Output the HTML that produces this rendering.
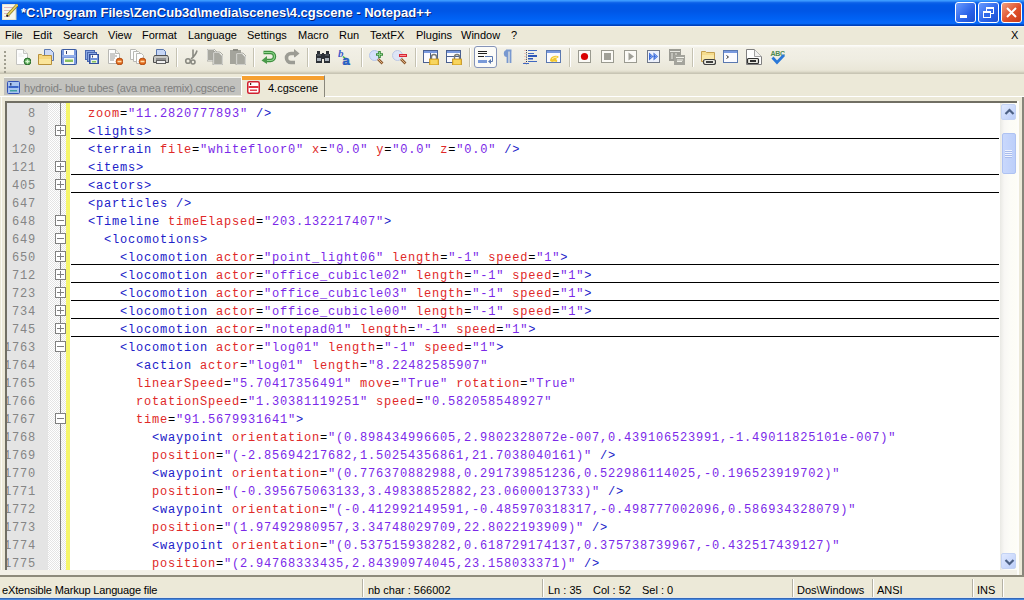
<!DOCTYPE html>
<html><head><meta charset="utf-8">
<style>
*{margin:0;padding:0;box-sizing:border-box}
html,body{width:1024px;height:600px;overflow:hidden;background:#ece9d8;font-family:"Liberation Sans",sans-serif;position:relative}
.a{position:absolute}
#title{left:0;top:0;width:1024px;height:26px;background:linear-gradient(to bottom,#3c9cff 0px,#3a98ff 1px,#1a70ee 2px,#0a60e8 3px,#0058e6 5px,#0056e6 11px,#005cee 15px,#0062f4 19px,#0868fa 22px,#0668f6 23.5px,#0050d0 24.5px,#0038b0 26px)}
#ttext{left:21px;top:5px;color:#fff;font-weight:bold;font-size:13px;white-space:nowrap;text-shadow:1px 1px 0 #0a1f6e}
.wb{top:2px;width:21px;height:21px;border:1px solid #fff;border-radius:3px}
#menu{left:0;top:26px;width:1024px;height:19px;background:#ece9d8}
.mi{top:29px;font-size:11px;color:#000;white-space:nowrap}
#tb{left:0;top:45px;width:1024px;height:29px;background:linear-gradient(to bottom,#fdfdfb 0px,#fbfaf6 1px,#f2f0e6 3px,#efede2 14px,#eae7d8 25px,#dcd9c8 27px,#c8c5b4 28px)}
.sep{top:48px;width:2px;height:19px;border-left:1px solid #c5c2b2;border-right:1px solid #fff}
.ic{top:49px;width:16px;height:16px}
#tabs{left:0;top:74px;width:1024px;height:27px;background:#ece9d8}
#editor{left:5px;top:101px;width:1012px;height:469px;background:#fff;border-top:2px solid #716f64}
.ln{position:absolute;left:4px;width:32px;text-align:right;font-family:"Liberation Mono",monospace;font-size:12px;letter-spacing:0.8px;line-height:18px;height:18px;color:#858585}
.cl{position:absolute;font-family:"Liberation Mono",monospace;font-size:12px;letter-spacing:0.8px;line-height:18px;height:18px;white-space:pre}
.fb{position:absolute;left:55px;width:11px;height:11px;border:1px solid #808080;background:#fff}
.fh{position:absolute;left:57px;width:7px;height:1px;background:#808080}
.fv{position:absolute;left:60px;width:1px;height:7px;background:#808080}
.hl{position:absolute;left:71px;width:928px;height:1px;background:#000}
#status{left:0;top:577px;width:1024px;height:21px;background:#ece9d8;font-size:11px}
.st{position:absolute;top:7px;white-space:nowrap;color:#000}
.ss{position:absolute;top:2px;width:2px;height:19px;border-left:1px solid #b4b1a4;border-right:1px solid #fff}
</style></head><body>
<div id="title" class="a"></div>
<svg class="a" style="left:2px;top:4px" width="16" height="16" viewBox="0 0 16 16">
 <rect x="0" y="0" width="14" height="16" fill="#f6f6ee"/><rect x="0" y="0" width="14" height="16" fill="none" stroke="#d8d4c0" stroke-width="1"/>
 <path d="M2 3.5H11M2 6.5H10M2 9.5H9M2 12.5H8" stroke="#e0b8c0" stroke-width="1"/>
 <path d="M5.5 11.5L15.5 0.5" stroke="#8a7a20" stroke-width="3"/><path d="M5.5 11.5L15.5 0.5" stroke="#e8d060" stroke-width="1.8"/><circle cx="5.2" cy="11.8" r="1.1" fill="#202020"/>
</svg>
<div id="ttext" class="a">*C:\Program Files\ZenCub3d\media\scenes\4.cgscene - Notepad++</div>
<div class="a wb" style="left:955px;background:linear-gradient(135deg,#6a9cff,#2a62e8 60%,#1e50d0)"><div class="a" style="left:4px;top:12px;width:7px;height:3px;background:#fff"></div></div>
<div class="a wb" style="left:978px;background:linear-gradient(135deg,#6a9cff,#2a62e8 60%,#1e50d0)"><div class="a" style="left:7px;top:4px;width:8px;height:7px;border:1px solid #fff;border-top-width:2px"></div><div class="a" style="left:4px;top:8px;width:8px;height:7px;border:1px solid #fff;border-top-width:2px;background:#2f68ea"></div></div>
<div class="a wb" style="left:1001px;background:linear-gradient(135deg,#f0a080,#e0502a 55%,#c83a18)"><svg class="a" style="left:4px;top:4px" width="11" height="11"><path d="M1 1L10 10M10 1L1 10" stroke="#fff" stroke-width="2"/></svg></div>

<div id="menu" class="a"></div><div class="a" style="left:0;top:26px;width:1024px;height:1px;background:#f2f3f6"></div>
<div class="a mi" style="left:5px">File</div>
<div class="a mi" style="left:33px">Edit</div>
<div class="a mi" style="left:63px">Search</div>
<div class="a mi" style="left:108px">View</div>
<div class="a mi" style="left:142px">Format</div>
<div class="a mi" style="left:188px">Language</div>
<div class="a mi" style="left:247px">Settings</div>
<div class="a mi" style="left:298px">Macro</div>
<div class="a mi" style="left:339px">Run</div>
<div class="a mi" style="left:370px">TextFX</div>
<div class="a mi" style="left:416px">Plugins</div>
<div class="a mi" style="left:461px">Window</div>
<div class="a mi" style="left:511px">?</div>
<div class="a mi" style="left:1011px">X</div>

<div id="tb" class="a"></div>
<div class="a" style="left:4px;top:51px;width:2px;height:2px;background:#a09e90"></div>
<div class="a" style="left:4px;top:55px;width:2px;height:2px;background:#a09e90"></div>
<div class="a" style="left:4px;top:59px;width:2px;height:2px;background:#a09e90"></div>
<div class="a" style="left:4px;top:63px;width:2px;height:2px;background:#a09e90"></div>
<div class="a" style="left:4px;top:67px;width:2px;height:2px;background:#a09e90"></div>
<div class="a" style="left:4px;top:71px;width:2px;height:2px;background:#a09e90"></div>
<div class="a" style="left:474px;top:46px;width:23px;height:22px;border:1px solid #8594b8;border-radius:3px;background:#fbfbf8"></div>
<svg class="a" style="left:15px;top:49px" width="16" height="16" viewBox="0 0 16 16"><path d="M1.5 0.5H8.5L12.5 4.5V15.5H1.5Z" fill="#fdfdfd" stroke="#c4c4c0"/><path d="M8.5 0.5V4.5H12.5" fill="#f0f0ee" stroke="#c4c4c0"/><path d="M3.5 5H7M3.5 7H9" stroke="#e8e8e8"/><circle cx="12.5" cy="12.5" r="3.4" fill="#58a858" stroke="#2a6a2a" stroke-width="1"/><path d="M12.5 10.4V14.6M10.4 12.5H14.6" stroke="#d8f8d0" stroke-width="1.4"/></svg>
<svg class="a" style="left:38px;top:49px" width="16" height="16" viewBox="0 0 16 16"><path d="M6.5 0.5H12.5L15.5 3.5V11.5H6.5Z" fill="#cdd9f6" stroke="#5a78b0"/><path d="M0.5 5.5H3.5L4.5 6.5H13.5V15.5H0.5Z" fill="#f7d77e" stroke="#b8903a"/><rect x="1" y="10" width="12" height="5" fill="#fbe59a"/></svg>
<svg class="a" style="left:61px;top:49px" width="16" height="16" viewBox="0 0 16 16"><rect x="0.5" y="0.5" width="15" height="15" rx="1" fill="#7b9be0" stroke="#3a5aa0"/><rect x="3" y="1" width="10" height="5" fill="#fcfcfc"/><rect x="5" y="2" width="1" height="3" fill="#304070"/><rect x="1" y="6" width="14" height="2" fill="#95b0ea"/><rect x="3" y="9" width="10" height="6" fill="#f6f8f0"/><rect x="4" y="10.5" width="8" height="2.5" fill="#88c060"/></svg>
<svg class="a" style="left:84px;top:49px" width="16" height="16" viewBox="0 0 16 16"><rect x="1.5" y="1.5" width="9" height="9" fill="#8aa8e4" stroke="#4a68b0"/><rect x="3.5" y="3.5" width="9" height="9" fill="#8aa8e4" stroke="#4a68b0"/><rect x="5.5" y="5.5" width="9" height="9" fill="#6f90d8" stroke="#34509a"/><rect x="7" y="6" width="6" height="3" fill="#fcfcfc"/><rect x="8" y="6.5" width="1" height="2" fill="#304070"/><rect x="7" y="11" width="6" height="3" fill="#e8f4e0"/><rect x="8" y="12" width="4" height="1.5" fill="#88c060"/></svg>
<svg class="a" style="left:107px;top:49px" width="16" height="16" viewBox="0 0 16 16"><path d="M1.5 0.5H8.5L12.5 4.5V14.5H1.5Z" fill="#fdfdfd" stroke="#b8b8b4"/><path d="M8.5 0.5V4.5H12.5" fill="#f0f0ee" stroke="#b8b8b4"/><path d="M3 5H8M3 7H10M3 9H8M3 11H7" stroke="#9a9a98"/><circle cx="12.5" cy="12.5" r="3.4" fill="#e0681c" stroke="#a84810" stroke-width="0.8"/><rect x="10.5" y="11.7" width="4" height="1.6" fill="#ffe0b0"/></svg>
<svg class="a" style="left:130px;top:49px" width="16" height="16" viewBox="0 0 16 16"><path d="M0.5 0.5H5.5L7.5 2.5V10.5H0.5Z" fill="#fdfdfd" stroke="#b8b8b4"/><path d="M3.5 2.5H8.5L10.5 4.5V12.5H3.5Z" fill="#fdfdfd" stroke="#b8b8b4"/><path d="M6.5 4.5H11.5L13.5 6.5V14.5H6.5Z" fill="#fdfdfd" stroke="#b8b8b4"/><circle cx="12.5" cy="12.5" r="3.4" fill="#e0681c" stroke="#a84810" stroke-width="0.8"/><rect x="10.5" y="11.7" width="4" height="1.6" fill="#ffe0b0"/></svg>
<svg class="a" style="left:153px;top:49px" width="16" height="16" viewBox="0 0 16 16"><path d="M3.5 0.5H10.5L12.5 2.5V7.5H3.5Z" fill="#c6d6f6" stroke="#5a78b0"/><path d="M1.5 6.5H14.5L15.5 8.5V13.5H0.5V8.5Z" fill="#c8c8c4" stroke="#505050"/><rect x="3" y="9" width="10" height="2" fill="#909090"/><rect x="3.5" y="11.5" width="9" height="3" fill="#f0f0f0" stroke="#606060"/></svg>
<svg class="a" style="left:184px;top:49px" width="16" height="16" viewBox="0 0 16 16"><path d="M9 0.5V9M13 1.5Q12 6 7 10" stroke="#8a8a82" stroke-width="1.6" fill="none"/><circle cx="4" cy="12" r="2.3" fill="none" stroke="#8a8a82" stroke-width="1.6"/><circle cx="9" cy="13" r="2" fill="none" stroke="#8a8a82" stroke-width="1.6"/></svg>
<svg class="a" style="left:207px;top:49px" width="16" height="16" viewBox="0 0 16 16"><path d="M0.5 0.5H6.5L9.5 3.5V11.5H0.5Z" fill="#a8a8a0" stroke="#f4f4f0"/><path d="M0 0H7L10 3V12H0Z" fill="none" stroke="#9a9a92" stroke-width="0.7"/><path d="M6.5 3.5H12.5L15.5 6.5V15.5H6.5Z" fill="#a8a8a0" stroke="#f4f4f0" stroke-width="1.2"/><path d="M6 3H13L16 6V16H6Z" fill="none" stroke="#9a9a92" stroke-width="0.8"/></svg>
<svg class="a" style="left:230px;top:49px" width="16" height="16" viewBox="0 0 16 16"><rect x="0" y="1" width="11" height="14" fill="#a4a49c"/><rect x="3" y="0" width="5" height="2" fill="#8c8c84"/><path d="M6.5 4.5H12.5L15.5 7.5V15.5H6.5Z" fill="#a8a8a0" stroke="#f4f4f0" stroke-width="1.2"/><path d="M6 4H13L16 7V16H6Z" fill="none" stroke="#9a9a92" stroke-width="0.8"/></svg>
<svg class="a" style="left:261px;top:49px" width="16" height="16" viewBox="0 0 16 16"><path d="M2.5 3.5H9.5A4 4 0 0 1 9.5 11.5H5" stroke="#3f8f3f" stroke-width="3.4" fill="none"/><path d="M2.5 3.5H9.5A4 4 0 0 1 9.5 11.5H5" stroke="#8fd88f" stroke-width="1.2" fill="none"/><path d="M0.5 11.5L6 7V15Z" fill="#4a9a4a"/></svg>
<svg class="a" style="left:284px;top:49px" width="16" height="16" viewBox="0 0 16 16"><path d="M10 4.5H7A4.5 4.5 0 0 0 7 13.5H11" stroke="#9c9c94" stroke-width="3.6" fill="none"/><path d="M15.5 4.5L10 0V9Z" fill="#9c9c94"/><path d="M8 9H11" stroke="#f0f0ec" stroke-width="1.2"/></svg>
<svg class="a" style="left:315px;top:49px" width="16" height="16" viewBox="0 0 16 16"><path d="M2 2H5V5H7V4H9V5H11V2H14V5H15V14H9V10H7V14H1V5H2Z" fill="#2c3036"/><rect x="2" y="9" width="4" height="3" fill="#a8b0b8"/><rect x="10" y="9" width="4" height="3" fill="#a8b0b8"/><path d="M2 6H6M10 6H14" stroke="#606870"/></svg>
<svg class="a" style="left:338px;top:49px" width="16" height="16" viewBox="0 0 16 16"><text x="0" y="8" font-family="Liberation Serif" font-weight="bold" font-style="italic" font-size="11" fill="#3a5ac8">b</text><path d="M5 7.5L8 10" stroke="#40b040" stroke-width="1.6"/><text x="4.5" y="15.5" font-family="Liberation Sans" font-weight="bold" font-size="13" fill="#2a6ad8" stroke="#1a4aa8" stroke-width="0.5">a</text></svg>
<svg class="a" style="left:369px;top:49px" width="16" height="16" viewBox="0 0 16 16"><circle cx="5.5" cy="6.5" r="5" fill="#d6e0fa" stroke="#b4c4ea"/><path d="M9 10L13.5 14.5" stroke="#8a5a30" stroke-width="2.6"/><path d="M9 10L13.5 14.5" stroke="#e0b080" stroke-width="1"/><path d="M10.5 2V9M7 5.5H14" stroke="#3a8a3a" stroke-width="2.6"/><path d="M10.5 3V8M8 5.5H13" stroke="#88d088" stroke-width="1"/></svg>
<svg class="a" style="left:392px;top:49px" width="16" height="16" viewBox="0 0 16 16"><circle cx="5.5" cy="6.5" r="5" fill="#dde4f6" stroke="#bcc8e4"/><path d="M9 10L13.5 14.5" stroke="#8a5a30" stroke-width="2.6"/><path d="M9 10L13.5 14.5" stroke="#e0b080" stroke-width="1"/><rect x="7" y="5" width="8" height="3" fill="#d82838"/><rect x="8" y="6" width="6" height="1" fill="#ff9090"/></svg>
<svg class="a" style="left:423px;top:49px" width="16" height="16" viewBox="0 0 16 16"><rect x="0.5" y="1.5" width="14" height="12" fill="#fbfbff" stroke="#4a6090"/><rect x="1" y="2" width="13" height="2" fill="#7a9ae0"/><line x1="7.5" y1="4" x2="7.5" y2="13" stroke="#4a6090"/><path d="M8.5 10V8A2.5 2.5 0 0 1 13.5 8V10" stroke="#7a7a72" stroke-width="1.4" fill="none"/><rect x="6.5" y="10" width="9" height="6" fill="#f4c840" stroke="#c09020" stroke-width="0.8"/><path d="M8 12H14M8 14H14" stroke="#fde890" stroke-width="0.8"/></svg>
<svg class="a" style="left:446px;top:49px" width="16" height="16" viewBox="0 0 16 16"><rect x="0.5" y="1.5" width="14" height="12" fill="#fbfbff" stroke="#4a6090"/><rect x="1" y="2" width="13" height="2" fill="#7a9ae0"/><line x1="1" y1="7.5" x2="14" y2="7.5" stroke="#4a6090"/><path d="M8.5 10V8A2.5 2.5 0 0 1 13.5 8V10" stroke="#7a7a72" stroke-width="1.4" fill="none"/><rect x="6.5" y="10" width="9" height="6" fill="#f4c840" stroke="#c09020" stroke-width="0.8"/><path d="M8 12H14M8 14H14" stroke="#fde890" stroke-width="0.8"/></svg>
<svg class="a" style="left:477px;top:49px" width="16" height="16" viewBox="0 0 16 16"><rect x="1" y="2" width="9" height="1" fill="#202020"/><rect x="1" y="4" width="9" height="1" fill="#202020"/><rect x="1" y="7" width="6" height="1" fill="#202020"/><path d="M8 7.5H15.5V12.5H13" stroke="#5a78b0" fill="none"/><rect x="1" y="11" width="9" height="3" fill="#7a9ad8"/><path d="M11 12.5L14 10V15Z" fill="#5a78b0"/></svg>
<svg class="a" style="left:500px;top:49px" width="16" height="16" viewBox="0 0 16 16"><path d="M6 1.5H11.5M7.5 1.5V14M10.5 1.5V14" stroke="#7898d0" stroke-width="1.8"/><path d="M7 1A3.2 3.5 0 0 0 7 8Z" fill="#7898d0"/></svg>
<svg class="a" style="left:523px;top:49px" width="16" height="16" viewBox="0 0 16 16"><path d="M3.5 1V16" stroke="#303850" stroke-dasharray="1 1.2"/><path d="M2 1V14" stroke="#e07060" stroke-dasharray="1 2" opacity="0.6"/><rect x="5" y="1" width="9" height="1" fill="#4068c0"/><rect x="5" y="4" width="6" height="1" fill="#4068c0"/><rect x="5" y="6" width="9" height="2" fill="#3058b8"/><rect x="5" y="9" width="5" height="1.5" fill="#3058b8"/><rect x="5" y="12" width="9" height="1" fill="#4068c0"/><rect x="0" y="14" width="6" height="1" fill="#4068c0"/></svg>
<svg class="a" style="left:546px;top:49px" width="16" height="16" viewBox="0 0 16 16"><rect x="0.5" y="1.5" width="14" height="12" fill="#fbfbff" stroke="#5a78b0"/><rect x="1" y="2" width="13" height="2" fill="#7a9ae0"/><path d="M4 12Q4 8 8 7Q11 6 13 8Q11 9 10 10Q12 11 11 13Q8 12 6 13Z" fill="#f2c830"/><path d="M6 10Q8 8 11 8" stroke="#fff4b0" fill="none"/></svg>
<svg class="a" style="left:577px;top:49px" width="16" height="16" viewBox="0 0 16 16"><rect x="1.5" y="1.5" width="12" height="12" fill="#fbfaf6" stroke="#9a9a90"/><circle cx="7.5" cy="7.5" r="3.6" fill="#d80000"/></svg>
<svg class="a" style="left:600px;top:49px" width="16" height="16" viewBox="0 0 16 16"><rect x="1.5" y="1.5" width="12" height="12" fill="#fbfaf6" stroke="#9a9a90"/><rect x="4" y="4" width="7" height="7" fill="#a0a098"/></svg>
<svg class="a" style="left:623px;top:49px" width="16" height="16" viewBox="0 0 16 16"><rect x="1.5" y="1.5" width="12" height="12" fill="#fbfaf6" stroke="#9a9a90"/><path d="M5.5 3.5L11 7.5L5.5 11.5Z" fill="#a0a098"/></svg>
<svg class="a" style="left:646px;top:49px" width="16" height="16" viewBox="0 0 16 16"><rect x="1.5" y="1.5" width="12" height="12" fill="#eef2fc" stroke="#707888"/><path d="M3 3.5L7.5 7.5L3 11.5Z M7.5 3.5L12 7.5L7.5 11.5Z" fill="#3a6ad8"/><path d="M4 5.5L6 7.5L4 9M8.5 5.5L10.5 7.5L8.5 9" stroke="#a0c0ff" fill="none" stroke-width="0.8"/></svg>
<svg class="a" style="left:669px;top:49px" width="16" height="16" viewBox="0 0 16 16"><rect x="0" y="0" width="12" height="12" fill="#9c9c94"/><rect x="5" y="6" width="11" height="10" fill="#a4a49c"/><path d="M1 2.5H11M2 5H4M2 7H4M2 9H4M6 5H8" stroke="#e8e8e0"/><path d="M7 8.5H15M8 11H14M8 12.5H13" stroke="#f0f0e8"/></svg>
<svg class="a" style="left:700px;top:49px" width="16" height="16" viewBox="0 0 16 16"><path d="M1.5 2.5H5.5L6.5 3.5H14.5V12.5H1.5Z" fill="#f6dc8c" stroke="#c4a050"/><rect x="2" y="6" width="12" height="6" fill="#fae8a8"/><rect x="3.5" y="10.5" width="12" height="5" rx="2" fill="#e8e8e0" stroke="#404040" stroke-width="1.2"/><rect x="6" y="12" width="7" height="2" fill="#404040"/></svg>
<svg class="a" style="left:723px;top:49px" width="16" height="16" viewBox="0 0 16 16"><rect x="0.5" y="1.5" width="14" height="12" fill="#fbfbff" stroke="#5a78b0"/><rect x="1" y="2" width="13" height="2" fill="#7a9ae0"/><path d="M3.5 6.5L5.5 8L3.5 9.5" stroke="#303030" fill="none"/></svg>
<svg class="a" style="left:746px;top:49px" width="16" height="16" viewBox="0 0 16 16"><path d="M0.5 0.5H8.5L15.5 7.5V15.5H0.5Z" fill="#fdfdfd" stroke="#808080"/><path d="M8.5 0.5V7.5H15.5" fill="#f0f0ee" stroke="#a0a0a0"/><rect x="1.5" y="9.5" width="11" height="5" rx="1" fill="#e8e8e0" stroke="#303030" stroke-width="1.2"/><rect x="4" y="11" width="6" height="2" fill="#303030"/></svg>
<svg class="a" style="left:769px;top:49px" width="16" height="16" viewBox="0 0 16 16"><text x="1.5" y="6.5" font-family="Liberation Sans" font-size="7" font-weight="bold" fill="#508a50" letter-spacing="-0.3">ABC</text><path d="M3.5 8.5L8 13.5L15 6" stroke="#2a78d8" stroke-width="2.8" fill="none"/></svg>
<div class="a sep" style="left:176px"></div>
<div class="a sep" style="left:253px"></div>
<div class="a sep" style="left:307px"></div>
<div class="a sep" style="left:361px"></div>
<div class="a sep" style="left:415px"></div>
<div class="a sep" style="left:469px"></div>
<div class="a sep" style="left:569px"></div>
<div class="a sep" style="left:692px"></div>

<div id="tabs" class="a"></div>
<div class="a" style="left:0;top:96px;width:1024px;height:1px;background:#fff"></div>
<div class="a" style="left:4px;top:77px;width:238px;height:18px;background:#c2c2be;border-top:1px solid #f4f4ee;border-right:1px solid #fff"></div><div class="a" style="left:4px;top:95px;width:237px;height:1px;background:#e4e2d6"></div>
<svg class="a" style="left:7px;top:81px" width="13" height="13" viewBox="0 0 13 13"><rect x="0.5" y="0.5" width="12" height="12" rx="1" fill="#a8c4f0" stroke="#3452b4"/><rect x="3" y="2" width="1.5" height="2.5" fill="#304070"/><rect x="1.5" y="5" width="10" height="2" fill="#3a64c8"/><rect x="3" y="9" width="7" height="1.5" fill="#40a0a0"/></svg>
<div class="a" style="left:24px;top:82px;font-size:11px;color:#808080;white-space:nowrap;letter-spacing:-0.21px">hydroid- blue tubes (ava mea remix).cgscene</div>
<div class="a" style="left:242px;top:75px;width:83px;height:22px;background:#ece9d8;border-top:1px solid #fff;border-right:1px solid #8a887c"></div>
<div class="a" style="left:242px;top:76px;width:82px;height:4px;background:#f6a030"></div>
<svg class="a" style="left:247px;top:81px" width="13" height="13" viewBox="0 0 13 13"><rect x="0.75" y="0.75" width="11.5" height="11.5" rx="1.5" fill="#fff" stroke="#d02030" stroke-width="1.5"/><rect x="3" y="2" width="1.2" height="2" fill="#502020"/><rect x="1.5" y="5" width="10" height="2" fill="#e03040"/><rect x="3" y="8.5" width="7" height="1.5" fill="#e04050"/></svg>
<div class="a" style="left:268px;top:82px;font-size:11px;color:#000;white-space:nowrap">4.cgscene</div>

<div id="editor" class="a">
</div>
<div class="a" style="left:7px;top:103px;width:41px;height:467px;background:#e4e4e4"></div>
<div class="a" style="left:48px;top:103px;width:19px;height:467px;background:repeating-conic-gradient(#e4e4e4 0 25%,#fff 0 50%) 0 0/2px 2px"></div>
<div class="a" style="left:60px;top:103px;width:1px;height:467px;background:#808080"></div>
<div class="a" style="left:66px;top:103px;width:4px;height:467px;background:#f6f66a"></div>
<div class="a" style="left:0px;top:570px;width:1022px;height:5px;background:#f3f1e8"></div>
<div id="code" class="a" style="left:0;top:0">
<div class="ln" style="top:105px">8</div>
<div class="cl" style="top:105px;left:88px"><span style="color:#e02828">zoom</span><span style="color:#000000">=</span><span style="color:#7a28e8">&quot;11.2820777893&quot;</span> <span style="color:#2020c8">/&gt;</span></div>
<div class="ln" style="top:123px">9</div>
<div class="cl" style="top:123px;left:88px"><span style="color:#2020c8">&lt;lights</span><span style="color:#2020c8">&gt;</span></div>
<div class="fb" style="top:125px"></div><div class="fh" style="top:130px"></div><div class="fv" style="top:127px"></div>
<div class="hl" style="top:138px"></div>
<div class="ln" style="top:141px">120</div>
<div class="cl" style="top:141px;left:88px"><span style="color:#2020c8">&lt;terrain</span> <span style="color:#e02828">file</span><span style="color:#000000">=</span><span style="color:#7a28e8">&quot;whitefloor0&quot;</span> <span style="color:#e02828">x</span><span style="color:#000000">=</span><span style="color:#7a28e8">&quot;0.0&quot;</span> <span style="color:#e02828">y</span><span style="color:#000000">=</span><span style="color:#7a28e8">&quot;0.0&quot;</span> <span style="color:#e02828">z</span><span style="color:#000000">=</span><span style="color:#7a28e8">&quot;0.0&quot;</span> <span style="color:#2020c8">/&gt;</span></div>
<div class="ln" style="top:159px">121</div>
<div class="cl" style="top:159px;left:88px"><span style="color:#2020c8">&lt;items</span><span style="color:#2020c8">&gt;</span></div>
<div class="fb" style="top:161px"></div><div class="fh" style="top:166px"></div><div class="fv" style="top:163px"></div>
<div class="hl" style="top:174px"></div>
<div class="ln" style="top:177px">405</div>
<div class="cl" style="top:177px;left:88px"><span style="color:#2020c8">&lt;actors</span><span style="color:#2020c8">&gt;</span></div>
<div class="fb" style="top:179px"></div><div class="fh" style="top:184px"></div><div class="fv" style="top:181px"></div>
<div class="hl" style="top:192px"></div>
<div class="ln" style="top:195px">647</div>
<div class="cl" style="top:195px;left:88px"><span style="color:#2020c8">&lt;particles</span> <span style="color:#2020c8">/&gt;</span></div>
<div class="ln" style="top:213px">648</div>
<div class="cl" style="top:213px;left:88px"><span style="color:#2020c8">&lt;Timeline</span> <span style="color:#e02828">timeElapsed</span><span style="color:#000000">=</span><span style="color:#7a28e8">&quot;203.132217407&quot;</span><span style="color:#2020c8">&gt;</span></div>
<div class="fb" style="top:215px"></div><div class="fh" style="top:220px"></div>
<div class="ln" style="top:231px">649</div>
<div class="cl" style="top:231px;left:104px"><span style="color:#2020c8">&lt;locomotions</span><span style="color:#2020c8">&gt;</span></div>
<div class="fb" style="top:233px"></div><div class="fh" style="top:238px"></div>
<div class="ln" style="top:249px">650</div>
<div class="cl" style="top:249px;left:120px"><span style="color:#2020c8">&lt;locomotion</span> <span style="color:#e02828">actor</span><span style="color:#000000">=</span><span style="color:#7a28e8">&quot;point_light06&quot;</span> <span style="color:#e02828">length</span><span style="color:#000000">=</span><span style="color:#7a28e8">&quot;-1&quot;</span> <span style="color:#e02828">speed</span><span style="color:#000000">=</span><span style="color:#7a28e8">&quot;1&quot;</span><span style="color:#2020c8">&gt;</span></div>
<div class="fb" style="top:251px"></div><div class="fh" style="top:256px"></div><div class="fv" style="top:253px"></div>
<div class="hl" style="top:264px"></div>
<div class="ln" style="top:267px">712</div>
<div class="cl" style="top:267px;left:120px"><span style="color:#2020c8">&lt;locomotion</span> <span style="color:#e02828">actor</span><span style="color:#000000">=</span><span style="color:#7a28e8">&quot;office_cubicle02&quot;</span> <span style="color:#e02828">length</span><span style="color:#000000">=</span><span style="color:#7a28e8">&quot;-1&quot;</span> <span style="color:#e02828">speed</span><span style="color:#000000">=</span><span style="color:#7a28e8">&quot;1&quot;</span><span style="color:#2020c8">&gt;</span></div>
<div class="fb" style="top:269px"></div><div class="fh" style="top:274px"></div><div class="fv" style="top:271px"></div>
<div class="hl" style="top:282px"></div>
<div class="ln" style="top:285px">723</div>
<div class="cl" style="top:285px;left:120px"><span style="color:#2020c8">&lt;locomotion</span> <span style="color:#e02828">actor</span><span style="color:#000000">=</span><span style="color:#7a28e8">&quot;office_cubicle03&quot;</span> <span style="color:#e02828">length</span><span style="color:#000000">=</span><span style="color:#7a28e8">&quot;-1&quot;</span> <span style="color:#e02828">speed</span><span style="color:#000000">=</span><span style="color:#7a28e8">&quot;1&quot;</span><span style="color:#2020c8">&gt;</span></div>
<div class="fb" style="top:287px"></div><div class="fh" style="top:292px"></div><div class="fv" style="top:289px"></div>
<div class="hl" style="top:300px"></div>
<div class="ln" style="top:303px">734</div>
<div class="cl" style="top:303px;left:120px"><span style="color:#2020c8">&lt;locomotion</span> <span style="color:#e02828">actor</span><span style="color:#000000">=</span><span style="color:#7a28e8">&quot;office_cubicle00&quot;</span> <span style="color:#e02828">length</span><span style="color:#000000">=</span><span style="color:#7a28e8">&quot;-1&quot;</span> <span style="color:#e02828">speed</span><span style="color:#000000">=</span><span style="color:#7a28e8">&quot;1&quot;</span><span style="color:#2020c8">&gt;</span></div>
<div class="fb" style="top:305px"></div><div class="fh" style="top:310px"></div><div class="fv" style="top:307px"></div>
<div class="hl" style="top:318px"></div>
<div class="ln" style="top:321px">745</div>
<div class="cl" style="top:321px;left:120px"><span style="color:#2020c8">&lt;locomotion</span> <span style="color:#e02828">actor</span><span style="color:#000000">=</span><span style="color:#7a28e8">&quot;notepad01&quot;</span> <span style="color:#e02828">length</span><span style="color:#000000">=</span><span style="color:#7a28e8">&quot;-1&quot;</span> <span style="color:#e02828">speed</span><span style="color:#000000">=</span><span style="color:#7a28e8">&quot;1&quot;</span><span style="color:#2020c8">&gt;</span></div>
<div class="fb" style="top:323px"></div><div class="fh" style="top:328px"></div><div class="fv" style="top:325px"></div>
<div class="hl" style="top:336px"></div>
<div class="ln" style="top:339px">1763</div>
<div class="cl" style="top:339px;left:120px"><span style="color:#2020c8">&lt;locomotion</span> <span style="color:#e02828">actor</span><span style="color:#000000">=</span><span style="color:#7a28e8">&quot;log01&quot;</span> <span style="color:#e02828">length</span><span style="color:#000000">=</span><span style="color:#7a28e8">&quot;-1&quot;</span> <span style="color:#e02828">speed</span><span style="color:#000000">=</span><span style="color:#7a28e8">&quot;1&quot;</span><span style="color:#2020c8">&gt;</span></div>
<div class="fb" style="top:341px"></div><div class="fh" style="top:346px"></div>
<div class="ln" style="top:357px">1764</div>
<div class="cl" style="top:357px;left:136px"><span style="color:#2020c8">&lt;action</span> <span style="color:#e02828">actor</span><span style="color:#000000">=</span><span style="color:#7a28e8">&quot;log01&quot;</span> <span style="color:#e02828">length</span><span style="color:#000000">=</span><span style="color:#7a28e8">&quot;8.22482585907&quot;</span></div>
<div class="ln" style="top:375px">1765</div>
<div class="cl" style="top:375px;left:136px"><span style="color:#e02828">linearSpeed</span><span style="color:#000000">=</span><span style="color:#7a28e8">&quot;5.70417356491&quot;</span> <span style="color:#e02828">move</span><span style="color:#000000">=</span><span style="color:#7a28e8">&quot;True&quot;</span> <span style="color:#e02828">rotation</span><span style="color:#000000">=</span><span style="color:#7a28e8">&quot;True&quot;</span></div>
<div class="ln" style="top:393px">1766</div>
<div class="cl" style="top:393px;left:136px"><span style="color:#e02828">rotationSpeed</span><span style="color:#000000">=</span><span style="color:#7a28e8">&quot;1.30381119251&quot;</span> <span style="color:#e02828">speed</span><span style="color:#000000">=</span><span style="color:#7a28e8">&quot;0.582058548927&quot;</span></div>
<div class="ln" style="top:411px">1767</div>
<div class="cl" style="top:411px;left:136px"><span style="color:#e02828">time</span><span style="color:#000000">=</span><span style="color:#7a28e8">&quot;91.5679931641&quot;</span><span style="color:#2020c8">&gt;</span></div>
<div class="fb" style="top:413px"></div><div class="fh" style="top:418px"></div>
<div class="ln" style="top:429px">1768</div>
<div class="cl" style="top:429px;left:152px"><span style="color:#2020c8">&lt;waypoint</span> <span style="color:#e02828">orientation</span><span style="color:#000000">=</span><span style="color:#7a28e8">&quot;(0.898434996605,2.9802328072e-007,0.439106523991,-1.49011825101e-007)&quot;</span></div>
<div class="ln" style="top:447px">1769</div>
<div class="cl" style="top:447px;left:152px"><span style="color:#e02828">position</span><span style="color:#000000">=</span><span style="color:#7a28e8">&quot;(-2.85694217682,1.50254356861,21.7038040161)&quot;</span> <span style="color:#2020c8">/&gt;</span></div>
<div class="ln" style="top:465px">1770</div>
<div class="cl" style="top:465px;left:152px"><span style="color:#2020c8">&lt;waypoint</span> <span style="color:#e02828">orientation</span><span style="color:#000000">=</span><span style="color:#7a28e8">&quot;(0.776370882988,0.291739851236,0.522986114025,-0.196523919702)&quot;</span></div>
<div class="ln" style="top:483px">1771</div>
<div class="cl" style="top:483px;left:152px"><span style="color:#e02828">position</span><span style="color:#000000">=</span><span style="color:#7a28e8">&quot;(-0.395675063133,3.49838852882,23.0600013733)&quot;</span> <span style="color:#2020c8">/&gt;</span></div>
<div class="ln" style="top:501px">1772</div>
<div class="cl" style="top:501px;left:152px"><span style="color:#2020c8">&lt;waypoint</span> <span style="color:#e02828">orientation</span><span style="color:#000000">=</span><span style="color:#7a28e8">&quot;(-0.412992149591,-0.485970318317,-0.498777002096,0.586934328079)&quot;</span></div>
<div class="ln" style="top:519px">1773</div>
<div class="cl" style="top:519px;left:152px"><span style="color:#e02828">position</span><span style="color:#000000">=</span><span style="color:#7a28e8">&quot;(1.97492980957,3.34748029709,22.8022193909)&quot;</span> <span style="color:#2020c8">/&gt;</span></div>
<div class="ln" style="top:537px">1774</div>
<div class="cl" style="top:537px;left:152px"><span style="color:#2020c8">&lt;waypoint</span> <span style="color:#e02828">orientation</span><span style="color:#000000">=</span><span style="color:#7a28e8">&quot;(0.537515938282,0.618729174137,0.375738739967,-0.432517439127)&quot;</span></div>
<div class="ln" style="top:555px">1775</div>
<div class="cl" style="top:555px;left:152px"><span style="color:#e02828">position</span><span style="color:#000000">=</span><span style="color:#7a28e8">&quot;(2.94768333435,2.84390974045,23.158033371)&quot;</span> <span style="color:#2020c8">/&gt;</span></div>
</div>
<div class="a" style="left:0;top:97px;width:5px;height:473px;background:#ece9d8"></div>
<div class="a" style="left:1px;top:97px;width:1px;height:473px;background:#fbfaf5"></div>
<div class="a" style="left:5px;top:101px;width:2px;height:469px;background:#716f64"></div>
<!-- scrollbar -->
<div class="a" style="left:1000px;top:103px;width:17px;height:467px;background:linear-gradient(to right,#e9e9e4,#f8f7f4 25%,#fcfcf7 60%,#fdfdf6)"></div>
<div class="a" style="left:1001px;top:104px;width:15px;height:16px;border-radius:2px;background:linear-gradient(135deg,#e0e9ff,#bccef8);border:1px solid #c4d3f4"><svg class="a" style="left:2px;top:3px" width="11" height="8"><path d="M1.5 6L5.5 2L9.5 6" stroke="#4d6185" stroke-width="2.2" fill="none"/></svg></div>
<div class="a" style="left:1002px;top:133px;width:14px;height:41px;border-radius:2px;background:linear-gradient(to right,#c9d8fc,#bccffa);border:1px solid #aec2f2"></div>
<div class="a" style="left:1005px;top:150px;width:7px;height:1px;background:#eef3ff"></div>
<div class="a" style="left:1005px;top:152px;width:7px;height:1px;background:#eef3ff"></div>
<div class="a" style="left:1005px;top:154px;width:7px;height:1px;background:#eef3ff"></div>
<div class="a" style="left:1005px;top:156px;width:7px;height:1px;background:#eef3ff"></div>
<div class="a" style="left:1005px;top:151px;width:7px;height:1px;background:#a8bcec"></div>
<div class="a" style="left:1005px;top:153px;width:7px;height:1px;background:#a8bcec"></div>
<div class="a" style="left:1005px;top:155px;width:7px;height:1px;background:#a8bcec"></div>
<div class="a" style="left:1005px;top:157px;width:7px;height:1px;background:#a8bcec"></div>
<div class="a" style="left:1001px;top:553px;width:15px;height:16px;border-radius:2px;background:linear-gradient(135deg,#e0e9ff,#bccef8);border:1px solid #c4d3f4"><svg class="a" style="left:2px;top:4px" width="11" height="8"><path d="M1.5 2L5.5 6L9.5 2" stroke="#4d6185" stroke-width="2.2" fill="none"/></svg></div>
<div class="a" style="left:1017px;top:101px;width:2px;height:474px;background:#fdfdfb"></div>
<div class="a" style="left:1019px;top:97px;width:3px;height:478px;background:#ece9d8"></div>
<div class="a" style="left:1022px;top:97px;width:2px;height:478px;background:#87857a"></div>

<div class="a" style="left:0;top:575px;width:1024px;height:2px;background:#8e8b7c"></div>
<div id="status" class="a">
 <div class="st" style="left:2px;letter-spacing:-0.16px">eXtensible Markup Language file</div>
 <div class="ss" style="left:362px"></div>
 <div class="st" style="left:368px">nb char : 566002</div>
 <div class="ss" style="left:542px"></div>
 <div class="st" style="left:548px">Ln : 35</div><div class="st" style="left:593px">Col : 52</div><div class="st" style="left:642px">Sel : 0</div>
 <div class="ss" style="left:792px"></div>
 <div class="st" style="left:797px">Dos\Windows</div>
 <div class="ss" style="left:872px"></div>
 <div class="st" style="left:877px">ANSI</div>
 <div class="ss" style="left:972px"></div>
 <div class="st" style="left:977px">INS</div>
 <div class="ss" style="left:1002px"></div>
</div>
<div class="a" style="left:0;top:597px;width:1024px;height:1px;background:#e4e8e8"></div><div class="a" style="left:0;top:598px;width:1024px;height:1px;background:#3468b8"></div><div class="a" style="left:0;top:599px;width:1024px;height:1px;background:#4488e0"></div>
</body></html>
